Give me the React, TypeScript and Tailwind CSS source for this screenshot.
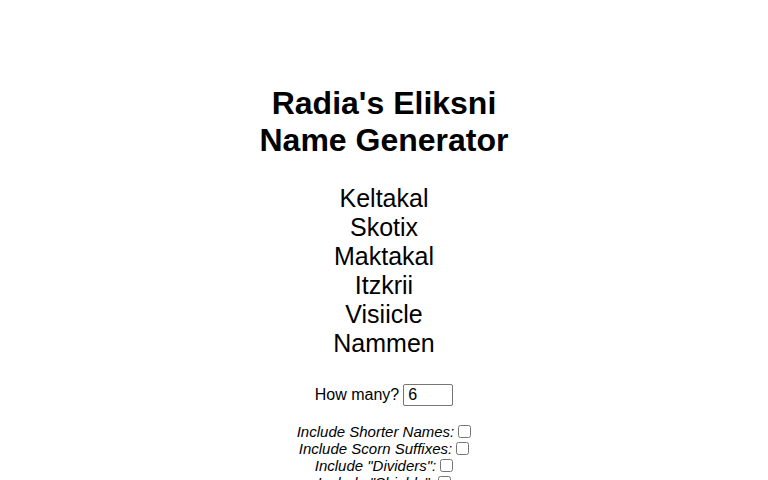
const names = ["Keltakal", "Skotix", "Maktakal", "Itzkrii", "Visiicle", "Nammen"];

const options = [
  "Include Shorter Names:",
  "Include Scorn Suffixes:",
  'Include "Dividers":',
  'Include "Shields":',
];

export default function App() {
  return (
    <div className="min-h-screen bg-white pt-[85px] text-center font-['Liberation_Sans',Arial,sans-serif] text-black">
      <h1 className="mx-auto w-[300px] text-[32px] font-bold leading-[37px]">Radia's Eliksni Name Generator</h1>

      <div className="mt-[25px] text-[25px] leading-[29px]">
        {names.map(n => (
          <div key={n}>{n}</div>
        ))}
      </div>

      <div className="mt-[26px] flex h-[22px] items-center justify-center text-[16px]">
        <label htmlFor="count">How many?</label>
        <input
          id="count"
          className="ml-[4px] h-[22px] w-[50px] rounded-[2px] border border-[#767676] px-[4px] text-[16px] leading-[20px]"
          defaultValue="6"
        />
      </div>

      <div className="mt-[17px] text-[15px] italic">
        {options.map(o => (
          <div key={o} className="flex h-[17px] items-center justify-center">
            <span className="pt-[2px]">{o}</span>
            <input type="checkbox" className="ml-[4px] h-[13px] w-[13px]" />
          </div>
        ))}
      </div>
    </div>
  );
}
